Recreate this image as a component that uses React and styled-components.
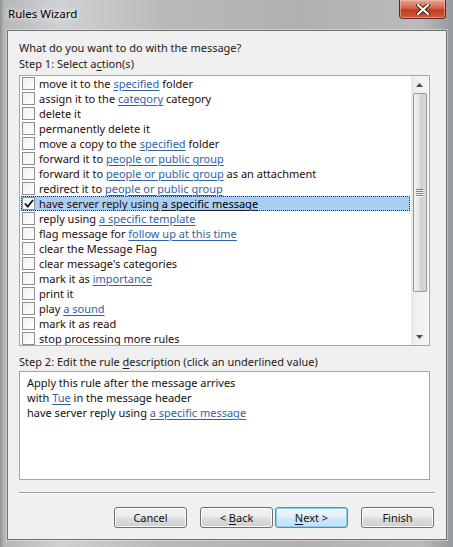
import React from 'react'
import styled, { createGlobalStyle, css } from 'styled-components'

const GlobalStyle = createGlobalStyle`
	html, body {
		margin: 0;
		padding: 0;
		background: #a9abad;
	}
	body {
		font-family: 'Noto Sans', 'Open Sans', sans-serif;
		font-size: 11px;
		color: #1b1b1b;
	}
`

const Window = styled.div`
	width: 453px;
	height: 547px;
	box-sizing: border-box;
	display: flex;
	flex-direction: column;
	padding: 0 6px 7px 7px;
	background: linear-gradient(
		to right,
		#8f9193 0px,
		#b4b6b8 4px,
		#cfd1d3 60px,
		#b8babc 160px,
		#aeb0b2 300px,
		#b9bbbd 420px,
		#979a9c 453px
	);
	overflow: hidden;
`

const TitleBar = styled.div`
	height: 30px;
	display: flex;
	justify-content: space-between;
	align-items: flex-start;
	flex-shrink: 0;
`

const Title = styled.div`
	padding: 6px 0 0 1px;
	font-size: 11.5px;
	color: #000;
	text-shadow: 0 0 8px #f4f4f4, 0 0 4px #eeeeee;
`

const CloseButton = styled.div`
	width: 47px;
	height: 19px;
	margin-right: 1px;
	box-sizing: border-box;
	border: 1px solid #5a2a22;
	border-top: none;
	border-radius: 0 0 4px 4px;
	background: linear-gradient(to bottom, #e8a593 0%, #d4644b 45%, #c23a1f 55%, #d05a3c 100%);
	box-shadow: inset 0 0 0 1px rgba(255, 200, 180, 0.5);
	display: flex;
	align-items: center;
	justify-content: center;
`

const Client = styled.div`
	flex: 1;
	background: #f0f0f0;
	border: 1px solid #6f7172;
	box-shadow: 0 0 0 1px rgba(255, 255, 255, 0.35);
	padding: 8px 0 0 11px;
	display: flex;
	flex-direction: column;
`

const Heading = styled.div`
	line-height: 17px;
	height: 17px;
`

const Label = styled.div`
	line-height: 16px;
	height: 16px;
	margin-top: ${(p) => p.top || 0}px;
`

const Key = styled.span`
	text-decoration: underline;
	text-underline-offset: 2px;
`

const ListBox = styled.div`
	margin-top: 3px;
	width: 411px;
	height: 271px;
	box-sizing: border-box;
	border: 1px solid #a5a5a5;
	background: #fff;
	display: flex;
	overflow: hidden;
`

const Rows = styled.div`
	flex: 1;
	padding-left: 1px;
	overflow: hidden;
`

const Row = styled.div`
	height: 15px;
	display: flex;
	align-items: center;
	gap: 4px;
	padding-left: 1px;
	margin-right: 1px;
	white-space: nowrap;
	box-sizing: border-box;
	color: #2a0a0a;
	${(p) =>
		p.selected &&
		css`
			background: #aacff2;
			outline: 1px dotted #333;
			outline-offset: -1px;
		`}
`

const Box = styled.span`
	width: 13px;
	height: 13px;
	box-sizing: border-box;
	border: 1px solid #8e8f8f;
	background: linear-gradient(135deg, #f0f0f0, #ffffff);
	flex-shrink: 0;
	display: flex;
	align-items: center;
	justify-content: center;
`

const Link = styled.span`
	color: ${(p) => (p.plain ? '#000' : '#2f62a8')};
	text-decoration: underline;
	text-underline-offset: 2px;
	text-decoration-color: ${(p) => (p.plain ? '#000' : '#2f62a8')};
`

const ScrollBar = styled.div`
	width: 17px;
	margin-right: 1px;
	background: linear-gradient(to right, #e6e6e6, #f2f2f2 40%, #f2f2f2);
	display: flex;
	flex-direction: column;
	align-items: center;
`

const Arrow = styled.div`
	height: 17px;
	width: 100%;
	display: flex;
	align-items: center;
	justify-content: center;
	flex-shrink: 0;
`

const Thumb = styled.div`
	width: 14px;
	height: 199px;
	box-sizing: border-box;
	border: 1px solid #979797;
	border-radius: 2px;
	background: linear-gradient(to right, #f2f2f2, #e4e4e4 45%, #cfcfcf 55%, #dadada);
	display: flex;
	align-items: center;
	justify-content: center;
`

const Grip = styled.div`
	display: flex;
	flex-direction: column;
	gap: 1px;
	& > span {
		width: 7px;
		height: 1px;
		background: #7a7a7a;
		box-shadow: 0 1px 0 #fafafa;
	}
`

const DescBox = styled.div`
	margin-top: 1px;
	width: 411px;
	height: 109px;
	box-sizing: border-box;
	border: 1px solid #a5a5a5;
	background: #fff;
	padding: 3px 0 0 7px;
	color: #111;
`

const DescLine = styled.div`
	line-height: 15px;
	white-space: nowrap;
`

const Separator = styled.div`
	margin-top: 12px;
	width: 416px;
	height: 1px;
	background: #a0a0a0;
	box-shadow: 0 1px 0 #ffffff;
`

const ButtonRow = styled.div`
	margin-top: 14px;
	width: 415px;
	display: flex;
	justify-content: flex-end;
`

const Button = styled.div`
	width: 73px;
	height: 21px;
	box-sizing: border-box;
	margin-left: ${(p) => p.gap}px;
	border: 1px solid ${(p) => (p.primary ? '#3c8fd0' : '#707070')};
	border-radius: 3px;
	background: ${(p) =>
		p.primary
			? 'linear-gradient(to bottom, #ecf6fc 0%, #e2f0fa 48%, #cde7f7 52%, #c3e1f5 100%)'
			: 'linear-gradient(to bottom, #f3f3f3 0%, #ebebeb 48%, #dddddd 52%, #cfcfcf 100%)'};
	box-shadow: inset 0 0 0 1px ${(p) => (p.primary ? '#8fd0f2' : '#fcfcfc')};
	display: flex;
	align-items: center;
	justify-content: center;
	color: #111;
	line-height: 1;
`

const actions = [
	['move it to the ', 'specified', ' folder'],
	['assign it to the ', 'category', ' category'],
	['delete it'],
	['permanently delete it'],
	['move a copy to the ', 'specified', ' folder'],
	['forward it to ', 'people or public group', ''],
	['forward it to ', 'people or public group', ' as an attachment'],
	['redirect it to ', 'people or public group', ''],
	['have server reply using ', 'a specific message', ''],
	['reply using ', 'a specific template', ''],
	['flag message for ', 'follow up at this time', ''],
	['clear the Message Flag'],
	["clear message's categories"],
	['mark it as ', 'importance', ''],
	['print it'],
	['play ', 'a sound', ''],
	['mark it as read'],
	['stop processing more rules'],
]

const Check = () => (
	<svg width='10' height='9' viewBox='0 0 10 9'>
		<path d='M1 4.5 L3.8 7.5 L9 1' fill='none' stroke='#111' strokeWidth='1.8' />
	</svg>
)

const App = () => {
	return (
		<>
			<GlobalStyle />
			<Window>
				<TitleBar>
					<Title>Rules Wizard</Title>
					<CloseButton>
						<svg width='14' height='11' viewBox='0 0 14 11'>
							<path
								d='M2 1 L12 10 M12 1 L2 10'
								stroke='#3a1a14'
								strokeWidth='4'
								strokeLinecap='round'
							/>
							<path
								d='M2 1 L12 10 M12 1 L2 10'
								stroke='#ffffff'
								strokeWidth='2.2'
								strokeLinecap='round'
							/>
						</svg>
					</CloseButton>
				</TitleBar>
				<Client>
					<Heading>What do you want to do with the message?</Heading>
					<Label>
						Step 1: Select a<Key>c</Key>tion(s)
					</Label>
					<ListBox>
						<Rows>
							{actions.map(([pre, link, post], i) => {
								const selected = i === 8
								return (
									<Row
										key={i}
										selected={selected}>
										<Box>{selected && <Check />}</Box>
										<span>
											{pre}
											{link && <Link plain={selected}>{link}</Link>}
											{post}
										</span>
									</Row>
								)
							})}
						</Rows>
						<ScrollBar>
							<Arrow>
								<svg width='7' height='4' viewBox='0 0 7 4'>
									<path d='M0 4 L3.5 0 L7 4 Z' fill='#4d4d4d' />
								</svg>
							</Arrow>
							<Thumb>
								<Grip>
									<span />
									<span />
									<span />
									<span />
								</Grip>
							</Thumb>
							<div style={{ flex: 1 }} />
							<Arrow>
								<svg width='7' height='4' viewBox='0 0 7 4'>
									<path d='M0 0 L7 0 L3.5 4 Z' fill='#4d4d4d' />
								</svg>
							</Arrow>
						</ScrollBar>
					</ListBox>
					<Label top={8}>
						Step 2: Edit the rule <Key>d</Key>escription (click an underlined value)
					</Label>
					<DescBox>
						<DescLine>Apply this rule after the message arrives</DescLine>
						<DescLine>
							with <Link>Tue</Link> in the message header
						</DescLine>
						<DescLine>
							have server reply using <Link>a specific message</Link>
						</DescLine>
					</DescBox>
					<Separator />
					<ButtonRow>
						<Button gap={0}>Cancel</Button>
						<Button gap={13}>
							&lt;&nbsp;<Key>B</Key>ack
						</Button>
						<Button
							gap={2}
							primary>
							<Key>N</Key>ext&nbsp;&gt;
						</Button>
						<Button gap={13}>Finish</Button>
					</ButtonRow>
				</Client>
			</Window>
		</>
	)
}

export default App
